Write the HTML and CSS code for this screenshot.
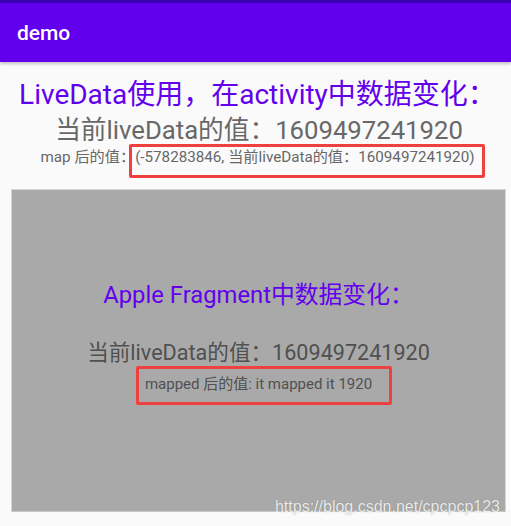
FILE: index.html
```html
<!DOCTYPE html>
<html lang="zh">
<head>
<meta charset="utf-8">
<title>demo</title>
<link rel="stylesheet" href="styles.css">
</head>
<body>
<div class="screen">
  <div class="status"></div>
  <header class="appbar"><span class="appbar-title">demo</span></header>
  <main class="content">
    <div class="activity-title">LiveData使用，在activity中数据变化：</div>
    <div class="activity-value">当前liveData的值：1609497241920</div>
    <div class="map-row">map 后的值：<span class="mark mark-map">(-578283846, 当前liveData的值：1609497241920)</span></div>
    <section class="fragment">
      <div class="fragment-title">Apple Fragment中数据变化：</div>
      <div class="fragment-value">当前liveData的值：1609497241920</div>
      <div class="fragment-map"><span class="mark mark-mapped">mapped 后的值: it mapped it 1920</span></div>
    </section>
  </main>
  <div class="watermark">https://blog.csdn.net/cpcpcp123</div>
</div>
</body>
</html>
```
FILE: styles.css
```css
html, body {
  margin: 0;
  padding: 0;
}
body {
  background: #fafafa;
  font-family: Roboto, "Noto Sans CJK SC", sans-serif;
}
.screen {
  position: relative;
  width: 511px;
  height: 526px;
  overflow: hidden;
  background: #fafafa;
}
.status {
  height: 3px;
  background: #3700b3;
}
.appbar {
  height: 59px;
  background: #6200ee;
  display: flex;
  align-items: center;
  padding-left: 17px;
  box-shadow: 0 2px 3px rgba(0,0,0,0.22);
  position: relative;
  z-index: 1;
}
.appbar-title {
  color: #fff;
  font-size: 21px;
  font-weight: 500;
  margin-top: 1px;
}
.content {
  display: flex;
  flex-direction: column;
  align-items: center;
}
.activity-title {
  margin-top: 18px;
  padding-left: 4px;
  font-size: 28px;
  line-height: 30px;
  color: #6200ee;
  white-space: nowrap;
}
.activity-value {
  margin-top: 6px;
  padding-left: 7px;
  font-size: 25.7px;
  line-height: 28px;
  color: #686868;
  white-space: nowrap;
}
.map-row {
  margin-top: 4px;
  font-size: 15.2px;
  line-height: 18px;
  color: #686868;
  white-space: nowrap;
  padding-left: 4px;
}
.mark {
  display: inline-block;
  border: 3px solid #ef4040;
  border-radius: 2px;
}
.mark-map {
  padding: 1px 8px 9px 3px;
  margin: -4px -11px -12px -6px;
}
.mark-mapped {
  padding: 6px 17px 9px 6px;
  margin: -9px -20px -12px -9px;
}
.fragment {
  align-self: stretch;
  margin: 23px 5px 0 11px;
  height: 323px;
  background: #a9a9a9;
  border: 1px solid #d6d6d6;
  border-bottom-color: #c8c8c8;
  display: flex;
  flex-direction: column;
  align-items: center;
  box-sizing: border-box;
  padding-top: 91px;
}
.fragment-title {
  font-size: 23.8px;
  line-height: 28px;
  color: #6200ee;
  white-space: nowrap;
}
.fragment-value {
  margin-top: 31px;
  font-size: 21.6px;
  line-height: 26px;
  color: #505050;
  white-space: nowrap;
}
.fragment-map {
  margin-top: 9px;
  font-size: 15px;
  line-height: 18px;
  color: #505050;
  white-space: nowrap;
}
.watermark {
  position: absolute;
  right: 11px;
  top: 497px;
  font-family: "Liberation Sans", Arial, sans-serif;
  font-size: 16px;
  line-height: 20px;
  color: rgba(255,255,255,0.85);
  text-shadow: 0 0 1px rgba(90,90,90,0.6);
  white-space: nowrap;
}
```
